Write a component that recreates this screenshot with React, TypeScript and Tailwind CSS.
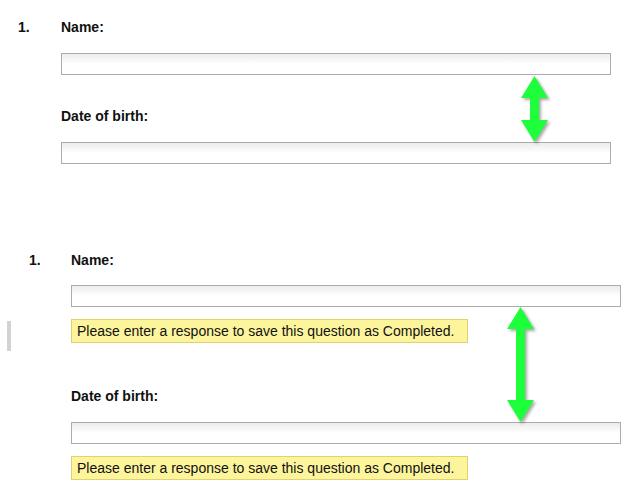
const font = { fontFamily: '"Liberation Sans", Arial, Helvetica, sans-serif' };

function TextBox() {
  return (
    <div className="h-[22px] w-full border border-[#ababab] bg-gradient-to-b from-[#ececec] via-white to-white" />
  );
}

function Warning() {
  return (
    <div className="mt-[12px] h-[24px] w-[397px] border border-[#e2d170] bg-[#fdf59c] pl-[5px] text-[14px] leading-[22px] text-[#111]">
      Please enter a response to save this question as Completed.
    </div>
  );
}

function Label({ children }: { children: React.ReactNode }) {
  return <div className="text-[14px] font-bold leading-[16px] text-[#111]">{children}</div>;
}

function Arrow({ h }: { h: number }) {
  // double-headed vertical arrow, 27 wide
  const head = 22;
  return (
    <svg width="30" height={h + 4} className="drop-shadow-[2px_2px_1.5px_rgba(0,0,0,0.35)]">
      <polygon
        points={`13.5,0 27,${head} 18,${head} 18,${h - head} 27,${h - head} 13.5,${h} 0,${h - head} 9,${h - head} 9,${head} 0,${head}`}
        fill="#1eff3c"
      />
    </svg>
  );
}

export default function App() {
  return (
    <div className="relative h-[504px] w-[632px] overflow-hidden bg-white" style={font}>
      {/* first version */}
      <div className="flex pl-[18px] pt-[19px]">
        <div className="w-[43px] text-[14px] font-bold leading-[16px] text-[#111]">1.</div>
        <div className="flex w-[550px] flex-col">
          <Label>Name:</Label>
          <div className="mt-[18px]">
            <TextBox />
          </div>
          <div className="mt-[33px]">
            <Label>Date of birth:</Label>
          </div>
          <div className="mt-[18px]">
            <TextBox />
          </div>
        </div>
      </div>

      {/* second version, with warnings */}
      <div className="relative mt-[88px] flex pl-[29px]">
        <div className="absolute left-[7px] top-[69px] h-[30px] w-[4px] bg-[#d2d2d2]" />
        <div className="w-[42px] text-[14px] font-bold leading-[16px] text-[#111]">1.</div>
        <div className="flex w-[550px] flex-col">
          <Label>Name:</Label>
          <div className="mt-[17px]">
            <TextBox />
          </div>
          <Warning />
          <div className="mt-[45px]">
            <Label>Date of birth:</Label>
          </div>
          <div className="mt-[18px]">
            <TextBox />
          </div>
          <Warning />
        </div>
      </div>

      <div className="absolute left-[521px] top-[76px]">
        <Arrow h={66} />
      </div>
      <div className="absolute left-[507px] top-[307px]">
        <Arrow h={115} />
      </div>
    </div>
  );
}
